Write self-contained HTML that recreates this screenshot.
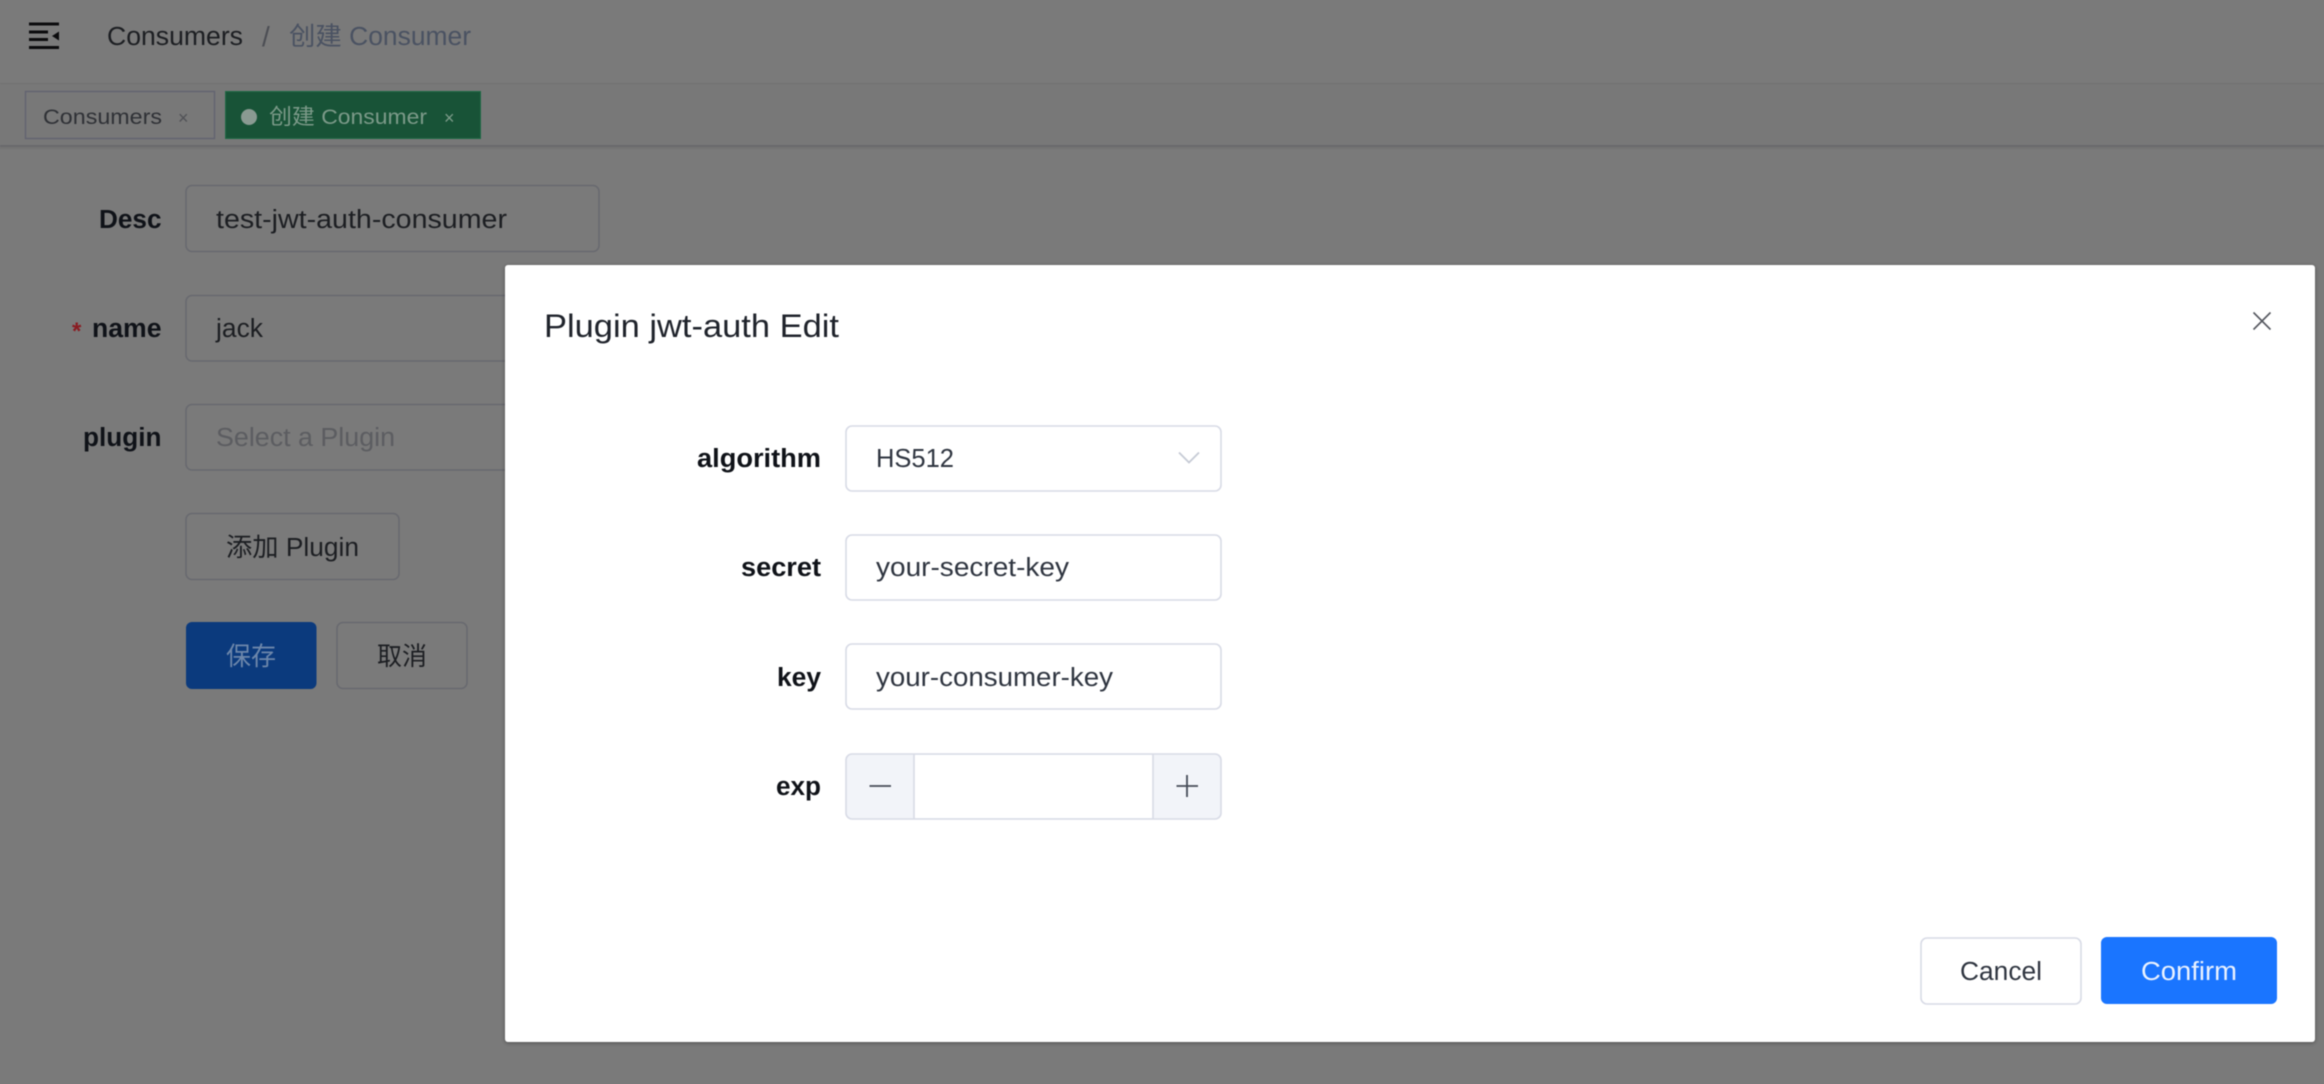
<!DOCTYPE html>
<html>
<head>
<meta charset="utf-8">
<title>Plugin jwt-auth Edit</title>
<style>
html,body{margin:0;padding:0;width:2324px;height:1084px;overflow:hidden;background:#7a7a7a}
svg{display:block;filter:blur(.5px)}
text{font-family:"Liberation Sans","Noto Sans CJK SC",sans-serif;font-size:25.5px}
.b{font-weight:700;fill:#0f1218}
.d{fill:#1c1e22}
.i{fill:#2f3540}
</style>
</head>
<body>
<svg width="2324" height="1084" viewBox="0 0 2324 1084" xmlns="http://www.w3.org/2000/svg">
<defs>
<filter id="sh" x="-5%" y="-5%" width="110%" height="110%"><feDropShadow dx="0" dy="1" stdDeviation="2" flood-color="#000" flood-opacity=".35"/></filter>
</defs>
<rect width="2324" height="1084" fill="#7a7a7a"/>

<!-- header -->
<g fill="#0c0c0e">
<rect x="29" y="22.5" width="30" height="3"/>
<rect x="29" y="30.5" width="19" height="3"/>
<rect x="29" y="38" width="19" height="3"/>
<rect x="29" y="46" width="30" height="3"/>
<path d="M52 36L59 31.5V40.5Z"/>
</g>
<text x="107" y="45" textLength="136" lengthAdjust="spacingAndGlyphs" class="d">Consumers</text>
<text x="262" y="46" style="font-size:28px" fill="#4c4e54">/</text>
<text x="289" y="45" textLength="182" lengthAdjust="spacingAndGlyphs" fill="#4a5262">创建 Consumer</text>

<!-- tags bar -->
<rect x="0" y="83" width="2324" height="1" fill="#707070"/>
<rect x="0" y="84" width="2324" height="61" fill="#787878"/>
<rect x="0" y="145" width="2324" height="2" fill="#69696c"/>
<rect x="0" y="147" width="2324" height="2" fill="#747474"/>
<rect x="25.5" y="91.5" width="189" height="47" fill="#787878" stroke="#616270" stroke-width="1.3"/>
<text x="43" y="124" textLength="119" lengthAdjust="spacingAndGlyphs" style="font-size:21.5px" fill="#2f3136">Consumers</text>
<text x="178" y="124" style="font-size:18px" fill="#505156">×</text>
<rect x="225.5" y="91.5" width="255" height="47" fill="#185337" stroke="#1f6a45"/>
<circle cx="249" cy="117" r="8" fill="#8a9a92"/>
<text x="269" y="124" textLength="158" lengthAdjust="spacingAndGlyphs" style="font-size:21.5px" fill="#7c9a89">创建 Consumer</text>
<text x="444" y="124" style="font-size:18px" fill="#7d9c8a">×</text>

<!-- form -->
<text x="99" y="228" textLength="62.5" lengthAdjust="spacingAndGlyphs" class="b">Desc</text>
<rect x="186" y="185.5" width="413" height="66" rx="6" fill="none" stroke="#68696f" stroke-width="1.5"/>
<text x="216" y="228" textLength="291" lengthAdjust="spacingAndGlyphs" class="d">test-jwt-auth-consumer</text>

<text x="72" y="339" style="font-size:24px;font-weight:700" fill="#8a1c22">*</text>
<text x="92" y="337" textLength="69.5" lengthAdjust="spacingAndGlyphs" class="b">name</text>
<rect x="186" y="295.5" width="413" height="65.5" rx="6" fill="none" stroke="#68696f" stroke-width="1.5"/>
<text x="216" y="337" textLength="47" lengthAdjust="spacingAndGlyphs" class="d">jack</text>

<text x="83" y="446" textLength="78.5" lengthAdjust="spacingAndGlyphs" class="b">plugin</text>
<rect x="186" y="404.5" width="413" height="65.5" rx="6" fill="none" stroke="#68696f" stroke-width="1.5"/>
<text x="216" y="446" textLength="179" lengthAdjust="spacingAndGlyphs" fill="#5c5d61">Select a Plugin</text>

<rect x="186" y="513.5" width="213" height="66" rx="6" fill="none" stroke="#68696f" stroke-width="1.5"/>
<text x="226" y="556" textLength="133" lengthAdjust="spacingAndGlyphs" class="d">添加 Plugin</text>

<rect x="186" y="622" width="130.5" height="67" rx="6" fill="#0b3a7d"/>
<text x="226" y="665" textLength="50" lengthAdjust="spacingAndGlyphs" fill="#6d87ab">保存</text>
<rect x="337" y="622.5" width="130" height="66" rx="6" fill="none" stroke="#68696f" stroke-width="1.5"/>
<text x="377" y="665" textLength="50" lengthAdjust="spacingAndGlyphs" class="d">取消</text>

<!-- modal -->
<rect x="505" y="265" width="1810" height="777" rx="3" fill="#ffffff" filter="url(#sh)"/>
<text x="544" y="337" textLength="295" lengthAdjust="spacingAndGlyphs" style="font-size:32.5px" fill="#1f232b">Plugin jwt-auth Edit</text>
<path d="M2253.5 312.5L2270.5 329.5M2270.5 312.5L2253.5 329.5" stroke="#55585f" stroke-width="1.6" fill="none"/>

<g fill="#fff" stroke="#d8dbe6" stroke-width="1.6">
<rect x="846" y="426" width="375" height="65" rx="6"/>
<rect x="846" y="535" width="375" height="65" rx="6"/>
<rect x="846" y="644" width="375" height="65" rx="6"/>
</g>

<text x="697" y="467" textLength="124" lengthAdjust="spacingAndGlyphs" class="b">algorithm</text>
<text x="876" y="467" textLength="78" lengthAdjust="spacingAndGlyphs" class="i">HS512</text>
<path d="M1179 452.5L1189 462.5L1199 452.5" fill="none" stroke="#c6cad5" stroke-width="1.8"/>

<text x="741" y="576" textLength="80" lengthAdjust="spacingAndGlyphs" class="b">secret</text>
<text x="876" y="576" textLength="193" lengthAdjust="spacingAndGlyphs" class="i">your-secret-key</text>

<text x="777" y="686" textLength="44" lengthAdjust="spacingAndGlyphs" class="b">key</text>
<text x="876" y="686" textLength="237" lengthAdjust="spacingAndGlyphs" class="i">your-consumer-key</text>

<text x="776" y="795" textLength="45" lengthAdjust="spacingAndGlyphs" class="b">exp</text>
<rect x="846" y="754" width="375" height="65" rx="6" fill="#f2f4f9" stroke="#d8dbe6" stroke-width="1.6"/>
<rect x="914" y="755" width="239" height="63" fill="#fff"/>
<path d="M914 754V819M1153 754V819" stroke="#d8dbe6" stroke-width="1.6" fill="none"/>
<path d="M869.5 786H891" stroke="#454b57" stroke-width="1.8" fill="none"/>
<path d="M1176.5 786H1198M1187 775V797" stroke="#454b57" stroke-width="1.8" fill="none"/>

<rect x="1921" y="938" width="160" height="66" rx="6" fill="#fff" stroke="#d8dbe6" stroke-width="1.6"/>
<text x="1960" y="980" textLength="82" lengthAdjust="spacingAndGlyphs" class="i">Cancel</text>
<rect x="2101" y="937" width="176" height="67" rx="6" fill="#1a75ff"/>
<text x="2141" y="980" textLength="96" lengthAdjust="spacingAndGlyphs" fill="#eaf2ff">Confirm</text>
</svg>
</body>
</html>
